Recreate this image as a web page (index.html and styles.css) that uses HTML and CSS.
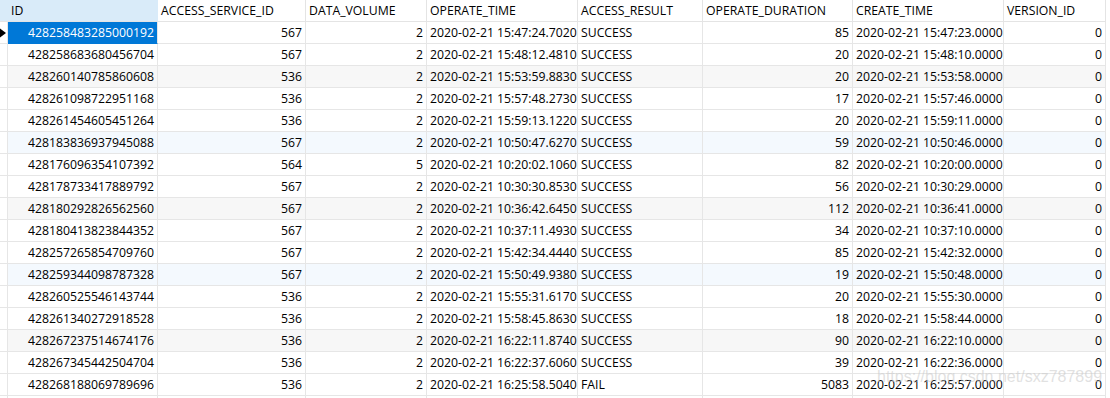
FILE: index.html
```html
<!DOCTYPE html>
<html>
<head>
<meta charset="utf-8">
<link rel="stylesheet" href="styles.css">
</head>
<body>
<div class="grid">
  <div class="row head">
    <div class="c mk hsel"></div>
    <div class="c hsel">ID</div>
    <div class="c">ACCESS_SERVICE_ID</div>
    <div class="c">DATA_VOLUME</div>
    <div class="c">OPERATE_TIME</div>
    <div class="c">ACCESS_RESULT</div>
    <div class="c">OPERATE_DURATION</div>
    <div class="c">CREATE_TIME</div>
    <div class="c">VERSION_ID</div>
  </div>
  <div class="row">
    <div class="c mk"><svg class="arrow" width="7" height="10" viewBox="0 0 7 10"><polygon points="0,0.5 6,5 0,9.5" fill="#000"/></svg></div>
    <div class="c r sel">428258483285000192</div><div class="c r">567</div><div class="c r">2</div><div class="c">2020-02-21 15:47:24.7020</div><div class="c">SUCCESS</div><div class="c r">85</div><div class="c">2020-02-21 15:47:23.0000</div><div class="c r">0</div>
  </div>
  <div class="row">
    <div class="c mk"></div>
    <div class="c r">428258683680456704</div><div class="c r">567</div><div class="c r">2</div><div class="c">2020-02-21 15:48:12.4810</div><div class="c">SUCCESS</div><div class="c r">20</div><div class="c">2020-02-21 15:48:10.0000</div><div class="c r">0</div>
  </div>
  <div class="row gray">
    <div class="c mk"></div>
    <div class="c r">428260140785860608</div><div class="c r">536</div><div class="c r">2</div><div class="c">2020-02-21 15:53:59.8830</div><div class="c">SUCCESS</div><div class="c r">20</div><div class="c">2020-02-21 15:53:58.0000</div><div class="c r">0</div>
  </div>
  <div class="row">
    <div class="c mk"></div>
    <div class="c r">428261098722951168</div><div class="c r">536</div><div class="c r">2</div><div class="c">2020-02-21 15:57:48.2730</div><div class="c">SUCCESS</div><div class="c r">17</div><div class="c">2020-02-21 15:57:46.0000</div><div class="c r">0</div>
  </div>
  <div class="row">
    <div class="c mk"></div>
    <div class="c r">428261454605451264</div><div class="c r">536</div><div class="c r">2</div><div class="c">2020-02-21 15:59:13.1220</div><div class="c">SUCCESS</div><div class="c r">20</div><div class="c">2020-02-21 15:59:11.0000</div><div class="c r">0</div>
  </div>
  <div class="row blue">
    <div class="c mk"></div>
    <div class="c r">428183836937945088</div><div class="c r">567</div><div class="c r">2</div><div class="c">2020-02-21 10:50:47.6270</div><div class="c">SUCCESS</div><div class="c r">59</div><div class="c">2020-02-21 10:50:46.0000</div><div class="c r">0</div>
  </div>
  <div class="row">
    <div class="c mk"></div>
    <div class="c r">428176096354107392</div><div class="c r">564</div><div class="c r">5</div><div class="c">2020-02-21 10:20:02.1060</div><div class="c">SUCCESS</div><div class="c r">82</div><div class="c">2020-02-21 10:20:00.0000</div><div class="c r">0</div>
  </div>
  <div class="row">
    <div class="c mk"></div>
    <div class="c r">428178733417889792</div><div class="c r">567</div><div class="c r">2</div><div class="c">2020-02-21 10:30:30.8530</div><div class="c">SUCCESS</div><div class="c r">56</div><div class="c">2020-02-21 10:30:29.0000</div><div class="c r">0</div>
  </div>
  <div class="row gray">
    <div class="c mk"></div>
    <div class="c r">428180292826562560</div><div class="c r">567</div><div class="c r">2</div><div class="c">2020-02-21 10:36:42.6450</div><div class="c">SUCCESS</div><div class="c r">112</div><div class="c">2020-02-21 10:36:41.0000</div><div class="c r">0</div>
  </div>
  <div class="row">
    <div class="c mk"></div>
    <div class="c r">428180413823844352</div><div class="c r">567</div><div class="c r">2</div><div class="c">2020-02-21 10:37:11.4930</div><div class="c">SUCCESS</div><div class="c r">34</div><div class="c">2020-02-21 10:37:10.0000</div><div class="c r">0</div>
  </div>
  <div class="row">
    <div class="c mk"></div>
    <div class="c r">428257265854709760</div><div class="c r">567</div><div class="c r">2</div><div class="c">2020-02-21 15:42:34.4440</div><div class="c">SUCCESS</div><div class="c r">85</div><div class="c">2020-02-21 15:42:32.0000</div><div class="c r">0</div>
  </div>
  <div class="row blue">
    <div class="c mk"></div>
    <div class="c r">428259344098787328</div><div class="c r">567</div><div class="c r">2</div><div class="c">2020-02-21 15:50:49.9380</div><div class="c">SUCCESS</div><div class="c r">19</div><div class="c">2020-02-21 15:50:48.0000</div><div class="c r">0</div>
  </div>
  <div class="row">
    <div class="c mk"></div>
    <div class="c r">428260525546143744</div><div class="c r">536</div><div class="c r">2</div><div class="c">2020-02-21 15:55:31.6170</div><div class="c">SUCCESS</div><div class="c r">20</div><div class="c">2020-02-21 15:55:30.0000</div><div class="c r">0</div>
  </div>
  <div class="row">
    <div class="c mk"></div>
    <div class="c r">428261340272918528</div><div class="c r">536</div><div class="c r">2</div><div class="c">2020-02-21 15:58:45.8630</div><div class="c">SUCCESS</div><div class="c r">18</div><div class="c">2020-02-21 15:58:44.0000</div><div class="c r">0</div>
  </div>
  <div class="row gray">
    <div class="c mk"></div>
    <div class="c r">428267237514674176</div><div class="c r">536</div><div class="c r">2</div><div class="c">2020-02-21 16:22:11.8740</div><div class="c">SUCCESS</div><div class="c r">90</div><div class="c">2020-02-21 16:22:10.0000</div><div class="c r">0</div>
  </div>
  <div class="row">
    <div class="c mk"></div>
    <div class="c r">428267345442504704</div><div class="c r">536</div><div class="c r">2</div><div class="c">2020-02-21 16:22:37.6060</div><div class="c">SUCCESS</div><div class="c r">39</div><div class="c">2020-02-21 16:22:36.0000</div><div class="c r">0</div>
  </div>
  <div class="row">
    <div class="c mk"></div>
    <div class="c r">428268188069789696</div><div class="c r">536</div><div class="c r">2</div><div class="c">2020-02-21 16:25:58.5040</div><div class="c">FAIL</div><div class="c r">5083</div><div class="c">2020-02-21 16:25:57.0000</div><div class="c r">0</div>
  </div>
  <div class="row last">
    <div class="c mk"></div>
    <div class="c"></div><div class="c"></div><div class="c"></div><div class="c"></div><div class="c"></div><div class="c"></div><div class="c"></div><div class="c"></div>
  </div>
  <div class="watermark">https://blog.csdn.net/sxz787899</div>
</div>
</body>
</html>
```
FILE: styles.css
```css
html, body {
  margin: 0;
  padding: 0;
  background: #ffffff;
}
body {
  width: 1110px;
  height: 398px;
  overflow: hidden;
  font-family: "Open Sans", "Noto Sans", sans-serif;
  font-size: 12.25px;
  color: #000;
}
.grid {
  position: relative;
  width: 1106px;
  height: 398px;
  overflow: hidden;
}
.row {
  display: grid;
  grid-template-columns: 8px 150px 148px 121px 151px 125px 150px 151px 102px;
  height: 22px;
}
.row.last {
  height: 2px;
}
.c {
  box-sizing: border-box;
  height: 22px;
  line-height: 21px;
  padding: 0 3px;
  border-right: 1px solid #e6e6e6;
  border-bottom: 1px solid #e6e6e6;
  white-space: nowrap;
  overflow: hidden;
}
.last .c {
  height: 2px;
  border-bottom: none;
}
.head .c {
  background: #ffffff;
  border-right-color: #e4e4e4;
  border-bottom-color: #e4e4e4;
}
.head .c.hsel {
  background: #d9ebf9;
  border-right-color: #d9ebf9;
}
.mk {
  padding: 0;
  position: relative;
  background: #ffffff;
}
.r {
  text-align: right;
}
.gray .c {
  background: #f7f7f7;
}
.blue .c {
  background: #f4f9fe;
}
.gray .c.mk, .blue .c.mk {
  background: #ffffff;
}
.c.sel {
  background: #0078d7;
  color: #ffffff;
  border-bottom-color: #0078d7;
}
.arrow {
  display: block;
  margin-top: 6px;
}
.watermark {
  position: absolute;
  left: 877px;
  top: 368px;
  font-family: "Liberation Sans", Arial, sans-serif;
  font-size: 16px;
  color: rgba(200, 200, 200, 0.55);
  pointer-events: none;
}
```
